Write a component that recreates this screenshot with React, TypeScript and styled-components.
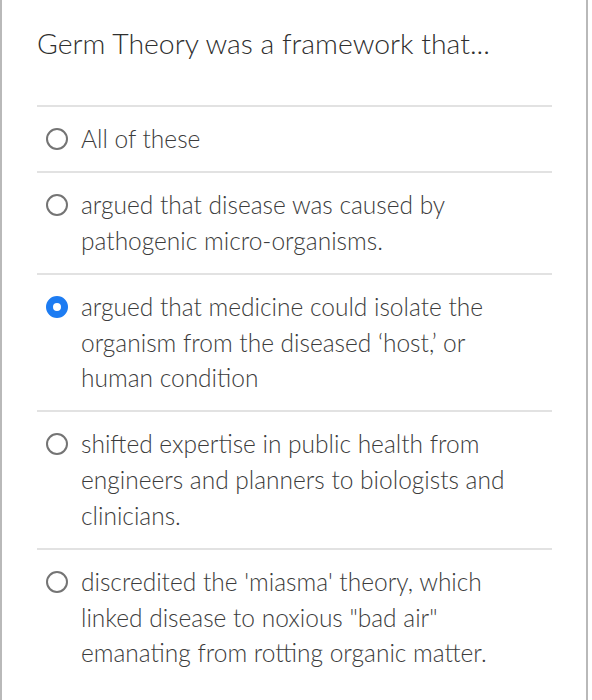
import { styled, createGlobalStyle } from 'styled-components';

const GlobalStyle = createGlobalStyle`
    html, body {
        margin: 0;
        padding: 0;
        background: #ffffff;
    }
    body {
        font-family: Lato, "Open Sans", sans-serif;
        color: #333333;
    }
`;

const Panel = styled.div`
    box-sizing: border-box;
    width: 588px;
    min-height: 700px;
    border-left: 2px solid #b9b9b9;
    border-right: 2px solid #b9b9b9;
    padding: 20px 34px 0 35px;
`;

const Question = styled.h1`
    margin: 0;
    padding-bottom: 39px;
    font-size: 28.4px;
    font-weight: 300;
    line-height: 46px;
    color: #2f2f2f;
    border-bottom: 2px solid #e2e2e2;
`;

const Options = styled.ul`
    list-style: none;
    margin: 0;
    padding: 0;
`;

const Option = styled.li`
    display: flex;
    align-items: flex-start;
    gap: 13px;
    padding: 14px 22px 14.3px 9px;
    border-bottom: 2px solid #e2e2e2;
    &:last-child {
        border-bottom: none;
    }
`;

const Radio = styled.span<{ checked: boolean }>`
    box-sizing: border-box;
    flex: none;
    width: 22px;
    height: 22px;
    margin-top: 7px;
    border-radius: 50%;
    background: ${p => (p.checked ? '#ffffff' : 'transparent')};
    border: ${p => (p.checked ? '7px solid #1d7cf2' : '2.5px solid #747474')};
`;

const Label = styled.span`
    font-size: 24.5px;
    font-weight: 300;
    line-height: 35.75px;
    color: #3c3c3c;
`;

interface Answer {
    id: string;
    text: string;
    checked?: boolean;
}

const answers: Answer[] = [
    { id: 'a', text: 'All of these' },
    { id: 'b', text: 'argued that disease was caused by pathogenic micro-organisms.' },
    {
        id: 'c',
        text: 'argued that medicine could isolate the organism from the diseased \u2018host,\u2019 or human condition',
        checked: true,
    },
    {
        id: 'd',
        text: 'shifted expertise in public health from engineers and planners to biologists and clinicians.',
    },
    {
        id: 'e',
        text: 'discredited the \'miasma\' theory, which linked disease to noxious "bad air" emanating from rotting organic matter.',
    },
];

export default function App() {
    return (
        <>
            <GlobalStyle />
            <Panel>
                <Question>Germ Theory was a framework that...</Question>
                <Options>
                    {answers.map(a => (
                        <Option key={a.id}>
                            <Radio checked={!!a.checked} />
                            <Label>{a.text}</Label>
                        </Option>
                    ))}
                </Options>
            </Panel>
        </>
    );
}
